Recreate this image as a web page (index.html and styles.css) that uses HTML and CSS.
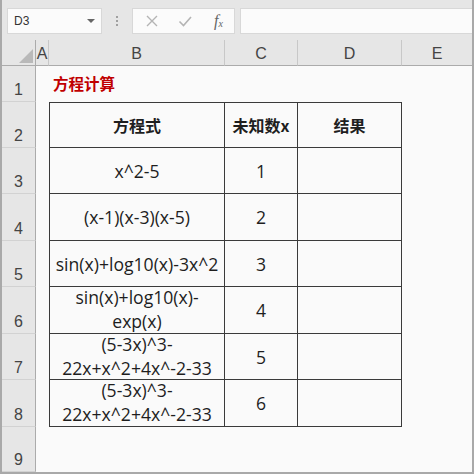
FILE: index.html
```html
<!DOCTYPE html>
<html>
<head>
<meta charset="utf-8">
<link rel="stylesheet" href="styles.css">
</head>
<body>
<div class="app">
  <div class="toolbar">
    <div class="namebox"><span class="ref">D3</span><span class="caret"></span></div>
    <div class="grip"><i></i><i></i><i></i></div>
    <div class="fbtns">
      <svg class="ico" width="16" height="16" viewBox="0 0 16 16"><path d="M3 3L13 13M13 3L3 13" stroke="#b4b4b4" stroke-width="1.4" fill="none"/></svg>
      <svg class="ico" width="16" height="16" viewBox="0 0 16 16"><path d="M2.5 8.5L6.5 12.5L14 4" stroke="#b4b4b4" stroke-width="1.6" fill="none"/></svg>
      <span class="fx">f<sub>x</sub></span>
    </div>
    <div class="formula"></div>
  </div>
  <div class="sheet">
    <div class="corner"><span class="tri"></span></div>
    <div class="colh">A</div>
    <div class="colh">B</div>
    <div class="colh">C</div>
    <div class="colh">D</div>
    <div class="colh last">E</div>

    <div class="rowh">1</div>
    <div class="cell"></div>
    <div class="cell title">方程计算</div>
    <div class="cell"></div>
    <div class="cell"></div>
    <div class="cell"></div>

    <div class="rowh">2</div>
    <div class="cell"></div>
    <div class="cell t tl tt th"><span class="cjk">方程式</span></div>
    <div class="cell t tt th"><span class="cjk">未知数x</span></div>
    <div class="cell t tt th"><span class="cjk">结果</span></div>
    <div class="cell"></div>

    <div class="rowh">3</div>
    <div class="cell"></div>
    <div class="cell t tl">x^2-5</div>
    <div class="cell t">1</div>
    <div class="cell t"></div>
    <div class="cell"></div>

    <div class="rowh">4</div>
    <div class="cell"></div>
    <div class="cell t tl">(x-1)(x-3)(x-5)</div>
    <div class="cell t">2</div>
    <div class="cell t"></div>
    <div class="cell"></div>

    <div class="rowh">5</div>
    <div class="cell"></div>
    <div class="cell t tl">sin(x)+log10(x)-3x^2</div>
    <div class="cell t">3</div>
    <div class="cell t"></div>
    <div class="cell"></div>

    <div class="rowh">6</div>
    <div class="cell"></div>
    <div class="cell t tl wrap"><span>sin(x)+log10(x)-<br>exp(x)</span></div>
    <div class="cell t">4</div>
    <div class="cell t"></div>
    <div class="cell"></div>

    <div class="rowh">7</div>
    <div class="cell"></div>
    <div class="cell t tl wrap"><span>(5-3x)^3-<br>22x+x^2+4x^-2-33</span></div>
    <div class="cell t">5</div>
    <div class="cell t"></div>
    <div class="cell"></div>

    <div class="rowh">8</div>
    <div class="cell"></div>
    <div class="cell t tl wrap"><span>(5-3x)^3-<br>22x+x^2+4x^-2-33</span></div>
    <div class="cell t">6</div>
    <div class="cell t"></div>
    <div class="cell"></div>

    <div class="rowh">9</div>
    <div class="cell"></div>
    <div class="cell"></div>
    <div class="cell"></div>
    <div class="cell"></div>
    <div class="cell"></div>
  </div>
</div>
</body>
</html>
```
FILE: styles.css
```css
* { box-sizing: border-box; }
html, body { margin: 0; padding: 0; }
body {
  width: 474px;
  height: 474px;
  overflow: hidden;
  background: #a9a9a9;
  font-family: "Liberation Sans", Arial, sans-serif;
}
.app {
  margin-left: 2px;
  width: 470px;
  height: 472px;
  background: #e6e6e6;
  display: flex;
  flex-direction: column;
}
.toolbar {
  height: 40px;
  display: flex;
  align-items: flex-start;
  padding-top: 8px;
  padding-left: 5px;
  background: #e6e6e6;
}
.namebox {
  width: 95px;
  height: 26px;
  background: #fbfbfb;
  border: 1px solid #d8d8d8;
  display: flex;
  align-items: center;
  justify-content: space-between;
  padding: 0 6px 0 6px;
  font-size: 12px;
  color: #333;
}
.caret {
  width: 0; height: 0;
  border-left: 4px solid transparent;
  border-right: 4px solid transparent;
  border-top: 4px solid #666;
}
.grip {
  width: 30px;
  height: 26px;
  display: flex;
  flex-direction: column;
  align-items: center;
  justify-content: center;
  gap: 2px;
}
.grip i {
  display: block;
  width: 2px; height: 2px;
  background: #a0a0a0;
}
.fbtns {
  width: 103px;
  height: 26px;
  background: #fbfbfb;
  border: 1px solid #d8d8d8;
  display: flex;
  align-items: center;
  padding-left: 11px;
  gap: 17px;
}
.fx {
  font-family: "Liberation Serif", serif;
  font-style: italic;
  font-size: 16px;
  color: #666;
  margin-left: 4px;
}
.fx sub { font-size: 10px; vertical-align: -1px; }
.formula {
  margin-left: 5px;
  flex: 1;
  height: 26px;
  background: #fbfbfb;
  border: 1px solid #d8d8d8;
  border-right: none;
}
.sheet {
  flex: 1;
  display: grid;
  grid-template-columns: 34px 13px 176px 73px 104px 1fr;
  grid-template-rows: 26px 36px 46px 46px 47px 46px 47px 46px 47px 1fr;
  background: #fafafa;
}
.corner {
  background: #e6e6e6;
  border-right: 1px solid #ababab;
  border-bottom: 1px solid #ababab;
  position: relative;
}
.tri {
  position: absolute;
  right: 2px;
  bottom: 2px;
  width: 0; height: 0;
  border-left: 14px solid transparent;
  border-bottom: 14px solid #b9b9b9;
}
.colh {
  background: #e6e6e6;
  border-right: 1px solid #c8c8c8;
  border-bottom: 1px solid #ababab;
  display: flex;
  align-items: flex-end;
  justify-content: center;
  padding-bottom: 2px;
  font-size: 16px;
  color: #444;
  line-height: 18px;
}
.colh.last { border-right: none; }
.rowh {
  background: #e6e6e6;
  border-right: 1px solid #ababab;
  border-bottom: 1px solid #d2d2d2;
  display: flex;
  align-items: flex-end;
  justify-content: center;
  padding-bottom: 2px;
  font-size: 16px;
  color: #444;
  line-height: 18px;
}
.cell {
  background: #fafafa;
  font-family: "Open Sans", "Noto Sans CJK SC", sans-serif;
  font-size: 17.6px;
  color: #1e1e1e;
  min-width: 0;
}
.title {
  font-family: "Noto Sans CJK SC", sans-serif;
  color: #c00000;
  font-weight: bold;
  font-size: 15.5px;
  display: flex;
  align-items: flex-end;
  padding-left: 4px;
  padding-bottom: 9px;
  line-height: 20px;
}
.t {
  border-right: 1px solid #3a3a3a;
  border-bottom: 1px solid #3a3a3a;
  display: flex;
  align-items: center;
  justify-content: center;
  text-align: center;
  line-height: 24px;
  overflow: visible;
  white-space: nowrap;
}
.tl { border-left: 1px solid #3a3a3a; }
.tt { border-top: 1px solid #3a3a3a; }
.th { font-weight: bold; }
.cjk {
  font-family: "Noto Sans CJK SC", sans-serif;
  font-size: 16px;
}
.wrap span { display: block; margin-top: -2px; }
```
